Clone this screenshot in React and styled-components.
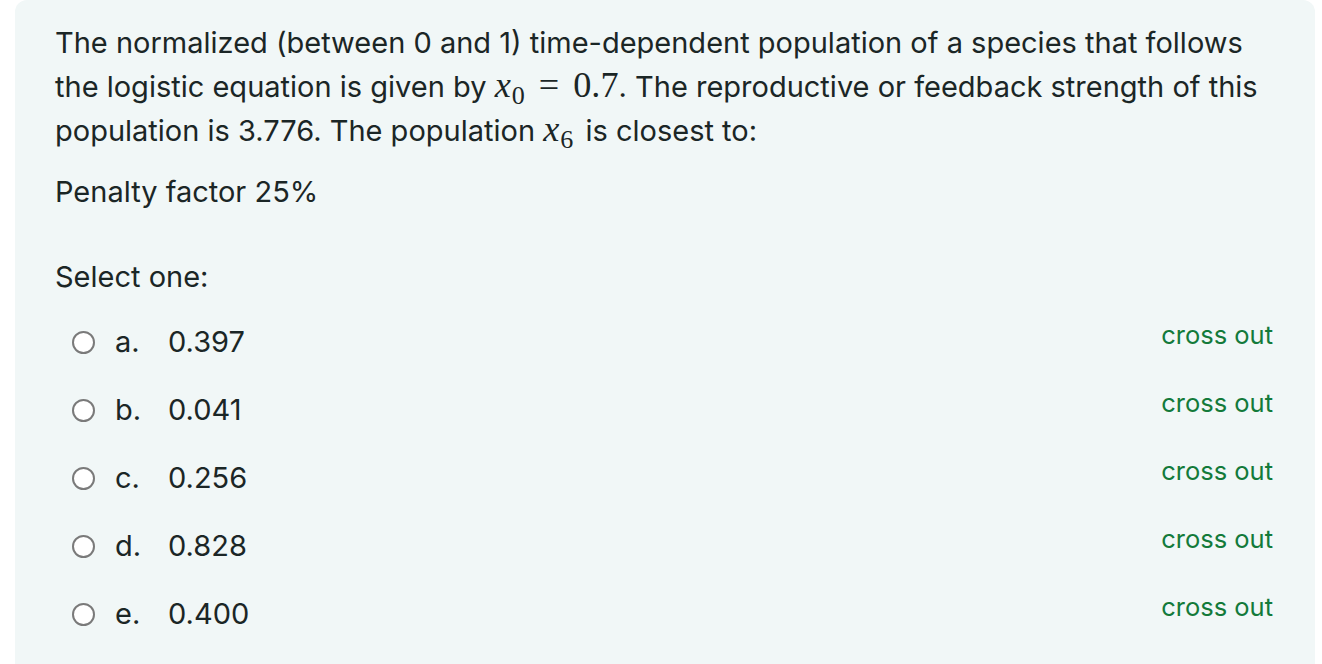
import React from "react";
import styled, { createGlobalStyle } from "styled-components";

const Global = createGlobalStyle`
  html, body { margin: 0; padding: 0; background: #ffffff; }
  body { font-family: Inter, "Noto Sans", sans-serif; }
`;

const Panel = styled.div`
  margin: 0 7px 0 15px;
  background: #f1f7f7;
  border-radius: 12px;
  padding: 21px 42px 40px 40px;
  color: #1b2626;
  font-size: 29px;
  line-height: 44px;
  min-height: 700px;
  box-sizing: border-box;
`;

const Para = styled.p`
  margin: 0 0 ${(p) => p.$mb || 0}px 0;
`;

const MathVar = styled.span`
  font-family: "Liberation Serif", "DejaVu Serif", serif;
  font-style: italic;
  font-size: 1.25em;
  line-height: 0;
  margin-right: ${(p) => p.$mr || 0}px;
`;

const Sub = styled.sub`
  font-family: "Liberation Serif", "DejaVu Serif", serif;
  font-style: normal;
  font-size: 0.72em;
  vertical-align: -0.25em;
  line-height: 0;
  margin-left: 1px;
`;

const MathRoman = styled.span`
  font-family: "Liberation Serif", "DejaVu Serif", serif;
  font-size: 1.25em;
  line-height: 0;
  margin: 0 ${(p) => p.$mx || 0}px;
`;

const OptionList = styled.div`
  display: flex;
  flex-direction: column;
  margin-top: 9px;
`;

const OptionRow = styled.div`
  display: flex;
  align-items: flex-start;
  padding: 12px 0;
  height: 44px;
`;

const Choice = styled.label`
  display: flex;
  align-items: center;
  flex: 1;
  height: 44px;
  padding-left: 17px;
`;

const Radio = styled.span`
  width: 19px;
  height: 19px;
  border: 2px solid #7a7a7a;
  border-radius: 50%;
  background: #ffffff;
  flex: none;
`;

const Letter = styled.span`
  margin-left: 20px;
  width: 53px;
`;

const Value = styled.span``;

const CrossOut = styled.button`
  border: none;
  background: none;
  padding: 0;
  font-family: Inter, "Noto Sans", sans-serif;
  font-size: 25.5px;
  line-height: 30px;
  color: #137a3a;
  cursor: pointer;
`;

const options = [
  ["a.", "0.397"],
  ["b.", "0.041"],
  ["c.", "0.256"],
  ["d.", "0.828"],
  ["e.", "0.400"],
];

export default function App() {
  return (
    <>
      <Global />
      <Panel>
        <Para $mb={17}>
          The normalized (between 0 and 1) time-dependent population of a species that follows
          the logistic equation is given by{" "}
          <MathVar>
            x<Sub>0</Sub>
          </MathVar>
          <MathRoman $mx={14}>=</MathRoman>
          <MathRoman>0.7</MathRoman>. The reproductive or feedback strength of this
          population is 3.776. The population{" "}
          <MathVar $mr={4}>
            x<Sub>6</Sub>
          </MathVar>{" "}
          is closest to:
        </Para>
        <Para $mb={41}>Penalty factor 25%</Para>
        <Para>Select one:</Para>
        <OptionList>
          {options.map(([l, v]) => (
            <OptionRow key={l}>
              <Choice>
                <Radio />
                <Letter>{l}</Letter>
                <Value>{v}</Value>
              </Choice>
              <CrossOut>cross out</CrossOut>
            </OptionRow>
          ))}
        </OptionList>
      </Panel>
    </>
  );
}
